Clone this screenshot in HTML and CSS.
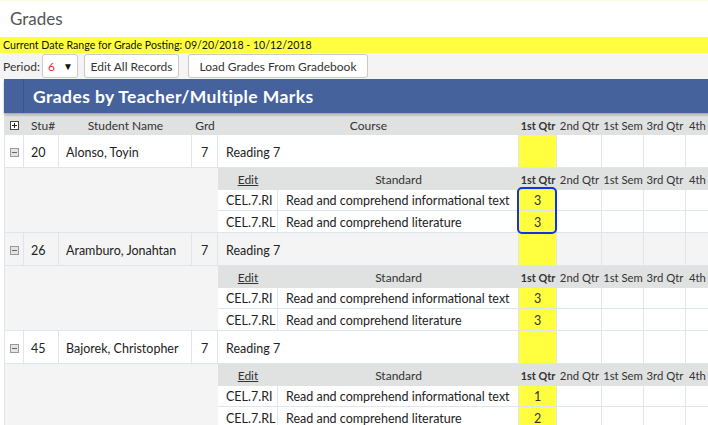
FILE: index.html
```html
<!DOCTYPE html>
<html>
<head>
<meta charset="utf-8">
<title>Grades</title>
<link rel="stylesheet" href="styles.css">
</head>
<body>
<div class="page">
  <div class="title">Grades</div>
  <div class="daterange">Current Date Range for Grade Posting: 09/20/2018 - 10/12/2018</div>
  <div class="toolbar">
    <span class="period-label">Period:</span>
    <span class="select"><span class="sel-val">6</span><span class="sel-arrow">&#9660;</span></span>
    <span class="btn btn-edit">Edit All Records</span>
    <span class="btn btn-load">Load Grades From Gradebook</span>
  </div>

  <div class="grid">
    <div class="panel-head">
      <div class="ph-icon"></div>
      <div class="ph-title">Grades by Teacher/Multiple Marks</div>
    </div>

    <div class="row head">
      <div class="c icon"><svg width="9" height="9" viewBox="0 0 9 9"><rect x="0.5" y="0.5" width="8" height="8" fill="#fff" stroke="#444"/><path d="M2 4.5h5M4.5 2v5" stroke="#222" stroke-width="1"/></svg></div>
      <div class="c stu">Stu#</div>
      <div class="c name ctr">Student Name</div>
      <div class="c grd ctr">Grd</div>
      <div class="c course ctr">Course</div>
      <div class="c q ctr bold">1st Qtr</div>
      <div class="c q ctr">2nd Qtr</div>
      <div class="c q ctr">1st Sem</div>
      <div class="c q ctr">3rd Qtr</div>
      <div class="c q lft">4th Qtr</div>
    </div>

    <!-- Student 20 -->
    <div class="row main">
      <div class="c icon"><svg width="9" height="9" viewBox="0 0 9 9"><rect x="0.5" y="0.5" width="8" height="8" fill="#e4e4e4" stroke="#999"/><path d="M2 4.5h5" stroke="#666"/></svg></div>
      <div class="c stu">20</div>
      <div class="c name">Alonso, Toyin</div>
      <div class="c grd ctr">7</div>
      <div class="c course">Reading 7</div>
      <div class="c q yellow"></div>
      <div class="c q"></div>
      <div class="c q"></div>
      <div class="c q"></div>
      <div class="c q"></div>
    </div>
    <div class="detail">
      <div class="spacer"></div>
      <div class="sub">
        <div class="srow shead">
          <div class="c edit ctr"><u>Edit</u></div>
          <div class="c std ctr">Standard</div>
          <div class="c q ctr bold">1st Qtr</div>
          <div class="c q ctr">2nd Qtr</div>
          <div class="c q ctr">1st Sem</div>
          <div class="c q ctr">3rd Qtr</div>
          <div class="c q lft">4th Qtr</div>
        </div>
        <div class="srow">
          <div class="c edit">CEL.7.RI</div>
          <div class="c std">Read and comprehend informational text</div>
          <div class="c q yellow ctr">3</div>
          <div class="c q"></div><div class="c q"></div><div class="c q"></div><div class="c q"></div>
        </div>
        <div class="srow last">
          <div class="c edit">CEL.7.RL</div>
          <div class="c std">Read and comprehend literature</div>
          <div class="c q yellow ctr">3</div>
          <div class="c q"></div><div class="c q"></div><div class="c q"></div><div class="c q"></div>
        </div>
        <div class="selbox"></div>
      </div>
    </div>

    <!-- Student 26 -->
    <div class="row main alt">
      <div class="c icon"><svg width="9" height="9" viewBox="0 0 9 9"><rect x="0.5" y="0.5" width="8" height="8" fill="#e4e4e4" stroke="#999"/><path d="M2 4.5h5" stroke="#666"/></svg></div>
      <div class="c stu">26</div>
      <div class="c name">Aramburo, Jonahtan</div>
      <div class="c grd ctr">7</div>
      <div class="c course">Reading 7</div>
      <div class="c q yellow"></div>
      <div class="c q"></div>
      <div class="c q"></div>
      <div class="c q"></div>
      <div class="c q"></div>
    </div>
    <div class="detail">
      <div class="spacer"></div>
      <div class="sub">
        <div class="srow shead">
          <div class="c edit ctr"><u>Edit</u></div>
          <div class="c std ctr">Standard</div>
          <div class="c q ctr bold">1st Qtr</div>
          <div class="c q ctr">2nd Qtr</div>
          <div class="c q ctr">1st Sem</div>
          <div class="c q ctr">3rd Qtr</div>
          <div class="c q lft">4th Qtr</div>
        </div>
        <div class="srow">
          <div class="c edit">CEL.7.RI</div>
          <div class="c std">Read and comprehend informational text</div>
          <div class="c q yellow ctr">3</div>
          <div class="c q"></div><div class="c q"></div><div class="c q"></div><div class="c q"></div>
        </div>
        <div class="srow last">
          <div class="c edit">CEL.7.RL</div>
          <div class="c std">Read and comprehend literature</div>
          <div class="c q yellow ctr">3</div>
          <div class="c q"></div><div class="c q"></div><div class="c q"></div><div class="c q"></div>
        </div>
      </div>
    </div>

    <!-- Student 45 -->
    <div class="row main">
      <div class="c icon"><svg width="9" height="9" viewBox="0 0 9 9"><rect x="0.5" y="0.5" width="8" height="8" fill="#e4e4e4" stroke="#999"/><path d="M2 4.5h5" stroke="#666"/></svg></div>
      <div class="c stu">45</div>
      <div class="c name">Bajorek, Christopher</div>
      <div class="c grd ctr">7</div>
      <div class="c course">Reading 7</div>
      <div class="c q yellow"></div>
      <div class="c q"></div>
      <div class="c q"></div>
      <div class="c q"></div>
      <div class="c q"></div>
    </div>
    <div class="detail">
      <div class="spacer"></div>
      <div class="sub">
        <div class="srow shead">
          <div class="c edit ctr"><u>Edit</u></div>
          <div class="c std ctr">Standard</div>
          <div class="c q ctr bold">1st Qtr</div>
          <div class="c q ctr">2nd Qtr</div>
          <div class="c q ctr">1st Sem</div>
          <div class="c q ctr">3rd Qtr</div>
          <div class="c q lft">4th Qtr</div>
        </div>
        <div class="srow">
          <div class="c edit">CEL.7.RI</div>
          <div class="c std">Read and comprehend informational text</div>
          <div class="c q yellow ctr">1</div>
          <div class="c q"></div><div class="c q"></div><div class="c q"></div><div class="c q"></div>
        </div>
        <div class="srow last">
          <div class="c edit">CEL.7.RL</div>
          <div class="c std">Read and comprehend literature</div>
          <div class="c q yellow ctr">2</div>
          <div class="c q"></div><div class="c q"></div><div class="c q"></div><div class="c q"></div>
        </div>
      </div>
    </div>
  </div>
</div>
</body>
</html>
```
FILE: styles.css
```css
html, body {
  margin: 0;
  padding: 0;
  background: #fff;
  overflow: hidden;
}
body {
  font-family: Lato, "Open Sans", "Liberation Sans", sans-serif;
  color: #222;
  width: 708px;
  height: 425px;
}
.page {
  width: 740px;
  border-top: 1px solid #fdfde0;
}
.title {
  height: 36px;
  box-sizing: border-box;
  padding: 8px 0 0 10px;
  font-size: 17px;
  color: #555;
  line-height: 20px;
}
.daterange {
  background: #ffff40;
  height: 16px;
  line-height: 17px;
  font-size: 10.6px;
  padding-left: 3px;
  color: #111;
}
.toolbar {
  background: #f4f4f4;
  height: 26px;
  display: flex;
  align-items: center;
  padding-left: 3px;
  font-size: 12px;
  color: #333;
}
.period-label { margin-right: 2px; }
.select {
  display: flex;
  align-items: center;
  justify-content: space-between;
  width: 36px;
  height: 24px;
  box-sizing: border-box;
  background: #fff;
  border: 1px solid #ccc;
  border-radius: 3px;
  padding: 0 4px 0 5px;
  margin-right: 6px;
}
.sel-val { color: #e8293a; font-size: 12px; }
.sel-arrow { font-size: 10px; color: #111; }
.btn {
  display: flex;
  align-items: center;
  justify-content: center;
  height: 24px;
  box-sizing: border-box;
  background: #fff;
  border: 1px solid #c9c9c9;
  border-radius: 3px;
  font-size: 12px;
  color: #333;
  white-space: nowrap;
}
.btn-edit { width: 95px; margin-right: 9px; }
.btn-load { width: 180px; }

.grid {
  margin-left: 4px;
}
.panel-head {
  display: flex;
  height: 34px;
  background: #45629c;
  box-shadow: 0 2px 2px rgba(0,0,0,0.35);
  position: relative;
  z-index: 1;
}
.ph-icon {
  width: 19px;
  border-right: 1px solid #3a5588;
}
.ph-title {
  padding-left: 9px;
  color: #fff;
  font-weight: bold;
  font-size: 17.5px;
  line-height: 35px;
  letter-spacing: 0.4px;
}

.row {
  display: grid;
  grid-template-columns: 20px 35px 133px 26px 301px 38px 45px 42px 42px 44px;
  font-size: 12.5px;
}
.c {
  box-sizing: border-box;
  display: flex;
  align-items: center;
  white-space: nowrap;
  overflow: hidden;
}
.ctr { justify-content: center; }
.lft { padding-left: 3px; }
.bold { font-weight: bold; }
.head {
  margin-top: 2px;
  height: 20px;
  background: #e0e1e1;
  color: #333;
  font-size: 12px;
}
.head .c { padding-top: 1px; }
.head .q { font-size: 11.3px; }
.head .bold { font-size: 10.8px; }
.head .stu { padding-left: 7px; }
.icon { justify-content: center; }
.main {
  height: 33px;
  box-sizing: border-box;
  background: #fff;
  border-bottom: 1px solid #dde6ea;
}
.main .c { padding-top: 2px; }
.main .icon { padding-top: 3px; }
.main.alt { background: #f4f4f4; }
.main .c { border-right: 1px solid #dde6ea; }
.main .icon { border-left: 1px solid #dde6ea; }
.main .stu { padding-left: 7px; }
.main .name { padding-left: 7px; }
.main .course { padding-left: 8px; }
.yellow { background: #ffff40; }
.main .q.yellow { background: #ffff40; }

.detail {
  display: flex;
  background: #f4f4f4;
  border-bottom: 1px solid #dde6ea;
  border-left: 1px solid #dde6ea;
}
.spacer { width: 213px; }
.sub { position: relative; }
.srow {
  display: grid;
  grid-template-columns: 60px 241px 38px 45px 42px 42px 44px;
  font-size: 12.5px;
  height: 21px;
  box-sizing: border-box;
  background: #fff;
  border-bottom: 1px solid #dde6ea;
}
.srow .c { padding-top: 1px; }
.srow.last { border-bottom: none; }
.srow .c { border-right: 1px solid #dde6ea; }
.srow .edit { padding-left: 8px; }
.srow .std { padding-left: 8px; }
.srow.shead {
  height: 22px;
  background: #e0e1e1;
  border-bottom: none;
  color: #333;
  font-size: 12px;
}
.srow.shead .c { border-right: none; }
.srow.shead .edit { padding-left: 0; }
.srow.shead .std { padding-left: 0; }
.srow.shead .q { font-size: 11.3px; }
.srow.shead .bold { font-size: 10.8px; }
.srow .q.yellow { color: #333; }
.selbox {
  position: absolute;
  left: 299px;
  top: 19px;
  width: 40px;
  height: 47px;
  box-sizing: border-box;
  border: 2px solid #1430e8;
  border-radius: 5px;
}
```
